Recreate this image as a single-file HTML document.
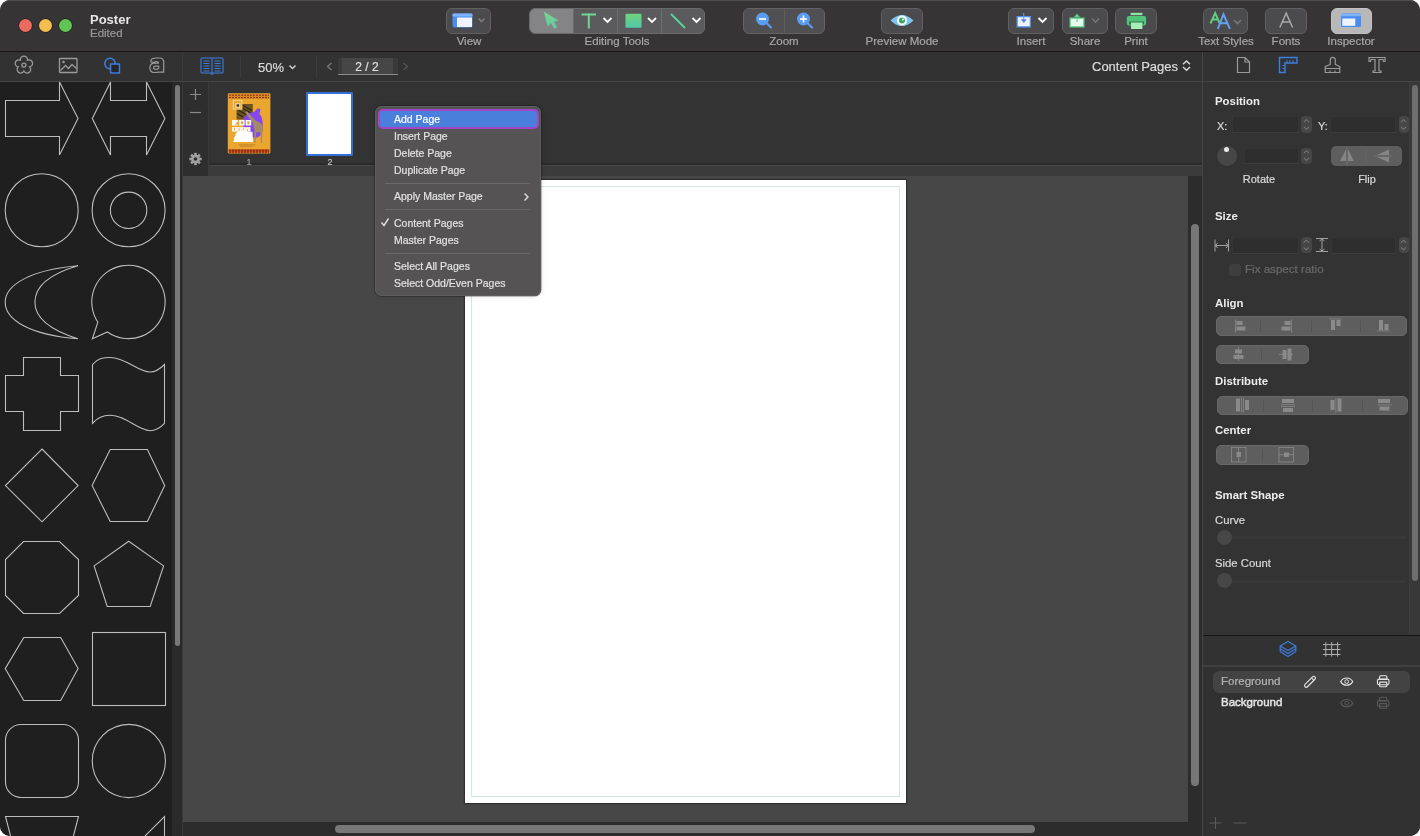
<!DOCTYPE html>
<html><head><meta charset="utf-8">
<style>
*{margin:0;padding:0;box-sizing:border-box}
html,body{width:1420px;height:836px;overflow:hidden;background:#ffffff;font-family:"Liberation Sans",sans-serif}
.a{position:absolute}
.t{position:absolute;white-space:nowrap;font-family:"Liberation Sans",sans-serif;will-change:transform}
svg{will-change:transform}
#win{position:absolute;left:0;top:0;width:1420px;height:836px;overflow:hidden;border-radius:10px;background:#303030}
</style></head><body><div id="win">
<div class="a" style="left:0px;top:0px;width:1420px;height:51px;background:#363435;"></div>
<div class="a" style="left:0px;top:51px;width:1420px;height:1px;background:#161516;"></div>
<div class="a" style="left:0px;top:52px;width:1420px;height:29px;background:#323232;"></div>
<div class="a" style="left:0px;top:81px;width:1420px;height:1px;background:#444444;"></div>
<div class="a" style="left:0px;top:82px;width:171.5px;height:754px;background:#201f20;"></div>
<div class="a" style="left:171.5px;top:82px;width:10.5px;height:754px;background:#2a2a2a;"></div>
<div class="a" style="left:174.8px;top:85px;width:5.6px;height:561px;background:#787878;border-radius:3px"></div>
<div class="a" style="left:182px;top:52px;width:1px;height:784px;background:#3a3a3a;"></div>
<div class="a" style="left:183px;top:82px;width:25px;height:94px;background:#2e2e2e;"></div>
<div class="a" style="left:208px;top:82px;width:1px;height:94px;background:#3a3a3a;"></div>
<div class="a" style="left:209px;top:82px;width:993px;height:83px;background:#333333;"></div>
<div class="a" style="left:209px;top:163px;width:993px;height:1.5px;background:#2b2b2b;"></div>
<div class="a" style="left:209px;top:164.5px;width:993px;height:1px;background:#454545;"></div>
<div class="a" style="left:209px;top:165.5px;width:993px;height:10.5px;background:#3b3b3b;"></div>
<div class="a" style="left:183px;top:176px;width:1005px;height:646px;background:#474747;"></div>
<div class="a" style="left:1188px;top:176px;width:14px;height:646px;background:#2c2c2c;"></div>
<div class="a" style="left:1191px;top:224px;width:8px;height:562px;background:#777777;border-radius:4px"></div>
<div class="a" style="left:183px;top:822px;width:1019px;height:14px;background:#2c2c2c;"></div>
<div class="a" style="left:335px;top:825px;width:700px;height:8px;background:#777777;border-radius:4px"></div>
<div class="a" style="left:1202px;top:52px;width:1px;height:784px;background:#454545;"></div>
<div class="a" style="left:1203px;top:82px;width:217px;height:553px;background:#333333;"></div>
<div class="a" style="left:1409px;top:82px;width:11px;height:553px;background:#383838;border-left:1px solid #3d3d3d"></div>
<div class="a" style="left:1412px;top:85px;width:6px;height:496px;background:#6e6e6e;border-radius:3px"></div>
<div class="a" style="left:1203px;top:634.5px;width:217px;height:1.5px;background:#161616;"></div>
<div class="a" style="left:1203px;top:636px;width:217px;height:29px;background:#323232;"></div>
<div class="a" style="left:1203px;top:665px;width:217px;height:1.5px;background:#3f3f3f;"></div>
<div class="a" style="left:1203px;top:666.5px;width:217px;height:170px;background:#313131;"></div>
<div class="a" style="left:19.0px;top:19.3px;width:13px;height:13px;border-radius:50%;background:#ec6a5e;box-shadow:0 0 0 0.7px rgba(0,0,0,0.35)"></div>
<div class="a" style="left:39.0px;top:19.3px;width:13px;height:13px;border-radius:50%;background:#f4bf4f;box-shadow:0 0 0 0.7px rgba(0,0,0,0.35)"></div>
<div class="a" style="left:59.0px;top:19.3px;width:13px;height:13px;border-radius:50%;background:#61c554;box-shadow:0 0 0 0.7px rgba(0,0,0,0.35)"></div>
<div class="t" style="left:90px;top:12.6px;font-size:13px;line-height:13px;color:#e6e6e6;font-weight:bold;">Poster</div>
<div class="t" style="left:90px;top:27.77px;font-size:11.5px;line-height:11.5px;color:#9a9a9a;font-weight:normal;-webkit-text-stroke:0.2px #9a9a9a;">Edited</div>
<div class="a" style="left:446px;top:8px;width:45px;height:26px;background:#4b4a4c;border:1px solid #605f61;border-radius:6px"></div>
<svg class="a" style="left:0px;top:0px" width="1420" height="836" viewBox="0 0 1420 836"><rect x="452.5" y="13.5" width="20" height="14" rx="2" fill="#4a8cf0"/><rect x="452.5" y="13.5" width="20" height="3" rx="1" fill="#7fb2ff"/><rect x="457" y="17.5" width="15" height="9.5" fill="#eef4ff"/><path d="M478.5 18.5 L481.5 21.5 L484.5 18.5" stroke="#7b7a7c" stroke-width="1.6" fill="none"/></svg>
<div class="t" style="left:268.5px;width:400px;text-align:center;top:36.17px;font-size:11.5px;line-height:11.5px;color:#a8a8a8;font-weight:normal;-webkit-text-stroke:0.2px #a8a8a8;">View</div>
<div class="a" style="left:529px;top:8px;width:176px;height:26px;background:#5b5a5c;border:1px solid #6a696b;border-radius:6px;overflow:hidden"><div class="a" style="left:0;top:0;width:43px;height:24px;background:#848385"></div></div>
<div class="a" style="left:617px;top:9px;width:1px;height:24px;background:#6d6c6e;"></div>
<div class="a" style="left:661px;top:9px;width:1px;height:24px;background:#6d6c6e;"></div>
<div class="a" style="left:573px;top:9px;width:1px;height:24px;background:#6a696b;"></div>
<svg class="a" style="left:0px;top:0px" width="1420" height="836" viewBox="0 0 1420 836"><defs><linearGradient id="ga" x1="0" y1="0" x2="0" y2="1"><stop offset="0" stop-color="#7ad690"/><stop offset="1" stop-color="#62c8a6"/></linearGradient></defs><path d="M544.3 12.3 L547.8 26.3 L551 22.5 L554.3 28.5 L556.8 27.2 L553.5 21.2 L558 20.5 Z" fill="url(#ga)" stroke="url(#ga)" stroke-width="0.6" stroke-linejoin="round"/><rect x="581.5" y="13.5" width="14.5" height="2" fill="#72d493"/><rect x="587.8" y="13.5" width="2" height="15" fill="#72d493"/><path d="M603.5 18 L607.5 22 L611.5 18" stroke="#ffffff" stroke-width="1.8" fill="none"/><defs><linearGradient id="gq" x1="0" y1="0" x2="0" y2="1"><stop offset="0" stop-color="#6fd27e"/><stop offset="1" stop-color="#52c8a8"/></linearGradient></defs><rect x="625.5" y="13.8" width="16" height="14" rx="1" fill="url(#gq)"/><path d="M648 18 L652 22 L656 18" stroke="#ffffff" stroke-width="1.8" fill="none"/><path d="M671.5 14.5 L684.5 27.5" stroke="#5fcf98" stroke-width="2" stroke-linecap="round"/><path d="M692.5 18 L696.5 22 L700.5 18" stroke="#ffffff" stroke-width="1.8" fill="none"/></svg>
<div class="t" style="left:417px;width:400px;text-align:center;top:36.17px;font-size:11.5px;line-height:11.5px;color:#a8a8a8;font-weight:normal;-webkit-text-stroke:0.2px #a8a8a8;">Editing Tools</div>
<div class="a" style="left:743px;top:8px;width:82px;height:26px;background:#504f51;border:1px solid #636264;border-radius:6px"></div>
<div class="a" style="left:784px;top:9px;width:1px;height:24px;background:#5d5c5e;"></div>
<svg class="a" style="left:0px;top:0px" width="1420" height="836" viewBox="0 0 1420 836"><circle cx="762.5" cy="19" r="6.5" fill="#5a9cf0"/><path d="M767 23.5 L771 27.5" stroke="#5a9cf0" stroke-width="2.2" stroke-linecap="round"/><rect x="759" y="18.2" width="7" height="1.6" fill="#ffffff"/><circle cx="803.5" cy="19" r="6.5" fill="#5a9cf0"/><path d="M808 23.5 L812 27.5" stroke="#5a9cf0" stroke-width="2.2" stroke-linecap="round"/><rect x="800" y="18.2" width="7" height="1.6" fill="#ffffff"/><rect x="802.7" y="15.5" width="1.6" height="7" fill="#ffffff"/></svg>
<div class="t" style="left:584px;width:400px;text-align:center;top:36.17px;font-size:11.5px;line-height:11.5px;color:#a8a8a8;font-weight:normal;-webkit-text-stroke:0.2px #a8a8a8;">Zoom</div>
<div class="a" style="left:881px;top:8px;width:42px;height:26px;background:#4b4a4c;border:1px solid #605f61;border-radius:6px"></div>
<svg class="a" style="left:0px;top:0px" width="1420" height="836" viewBox="0 0 1420 836"><path d="M890.5 20.5 Q902 9.5 913.5 20.5 Q902 31.5 890.5 20.5 Z" fill="#7cc4ee"/><circle cx="902" cy="20.5" r="5" fill="#ffffff"/><circle cx="902" cy="20.5" r="3" fill="#3aa860"/><circle cx="903" cy="19.5" r="1" fill="#ffffff"/></svg>
<div class="t" style="left:702px;width:400px;text-align:center;top:36.17px;font-size:11.5px;line-height:11.5px;color:#a8a8a8;font-weight:normal;-webkit-text-stroke:0.2px #a8a8a8;">Preview Mode</div>
<div class="a" style="left:1008px;top:8px;width:46px;height:26px;background:#4b4a4c;border:1px solid #605f61;border-radius:6px"></div>
<svg class="a" style="left:0px;top:0px" width="1420" height="836" viewBox="0 0 1420 836"><rect x="1016.5" y="16" width="14.5" height="11.5" fill="#5590f0"/><rect x="1017.8" y="17.3" width="11.9" height="8.9" fill="#eef4ff"/><path d="M1023.75 13 V20" stroke="#6b9cf0" stroke-width="1"/><path d="M1020.8 19.3 H1026.7 L1023.75 23 Z" fill="#4a86e8"/><path d="M1038.5 18 L1042.5 22 L1046.5 18" stroke="#ffffff" stroke-width="1.8" fill="none"/></svg>
<div class="t" style="left:831px;width:400px;text-align:center;top:36.17px;font-size:11.5px;line-height:11.5px;color:#a8a8a8;font-weight:normal;-webkit-text-stroke:0.2px #a8a8a8;">Insert</div>
<div class="a" style="left:1062px;top:8px;width:46px;height:26px;background:#4b4a4c;border:1px solid #605f61;border-radius:6px"></div>
<svg class="a" style="left:0px;top:0px" width="1420" height="836" viewBox="0 0 1420 836"><rect x="1069.5" y="17.5" width="15" height="10" fill="#5fd08a"/><rect x="1070.8" y="18.8" width="12.4" height="7.4" fill="#e4fbee"/><path d="M1077 17 V22" stroke="#5cc985" stroke-width="1"/><path d="M1073.8 17.3 H1080.2 L1077 13.5 Z" fill="#5cc985"/><path d="M1092 18.5 L1095.5 22 L1099 18.5" stroke="#767577" stroke-width="1.6" fill="none"/></svg>
<div class="t" style="left:884.5px;width:400px;text-align:center;top:36.17px;font-size:11.5px;line-height:11.5px;color:#a8a8a8;font-weight:normal;-webkit-text-stroke:0.2px #a8a8a8;">Share</div>
<div class="a" style="left:1115px;top:8px;width:42px;height:26px;background:#4b4a4c;border:1px solid #605f61;border-radius:6px"></div>
<svg class="a" style="left:0px;top:0px" width="1420" height="836" viewBox="0 0 1420 836"><rect x="1130.6" y="12.8" width="11.8" height="2.4" fill="#8ee6a4"/><rect x="1126.8" y="16" width="19.3" height="9.5" rx="2" fill="#52c47a"/><rect x="1129" y="21.5" width="15" height="3" fill="#2f7a4e"/><rect x="1131" y="22.5" width="11.4" height="6.5" fill="#a4f0b4"/></svg>
<div class="t" style="left:935.5px;width:400px;text-align:center;top:36.17px;font-size:11.5px;line-height:11.5px;color:#a8a8a8;font-weight:normal;-webkit-text-stroke:0.2px #a8a8a8;">Print</div>
<div class="a" style="left:1203px;top:8px;width:45px;height:26px;background:#4b4a4c;border:1px solid #605f61;border-radius:6px"></div>
<svg class="a" style="left:0px;top:0px" width="1420" height="836" viewBox="0 0 1420 836"><path d="M1210.5 23.5 L1215.2 13.2 L1219.5 23 M1212.5 19.5 H1217.8" stroke="#62d07e" stroke-width="1.9" fill="none"/><path d="M1217.8 28.8 L1223.5 14.3 L1229.9 28.8 M1220 23.2 H1227.8" stroke="#62a2f5" stroke-width="1.9" fill="none"/><path d="M1234 20 L1237.5 23.5 L1241 20" stroke="#767577" stroke-width="1.6" fill="none"/></svg>
<div class="t" style="left:1026px;width:400px;text-align:center;top:36.17px;font-size:11.5px;line-height:11.5px;color:#a8a8a8;font-weight:normal;-webkit-text-stroke:0.2px #a8a8a8;">Text Styles</div>
<div class="a" style="left:1265px;top:8px;width:42px;height:26px;background:#4b4a4c;border:1px solid #605f61;border-radius:6px"></div>
<svg class="a" style="left:0px;top:0px" width="1420" height="836" viewBox="0 0 1420 836"><path d="M1279.8 27.5 L1286.2 13.2 L1292.6 27.5 M1282.3 22 H1290.1" stroke="#a8a8a8" stroke-width="1.5" fill="none"/></svg>
<div class="t" style="left:1086px;width:400px;text-align:center;top:36.17px;font-size:11.5px;line-height:11.5px;color:#a8a8a8;font-weight:normal;-webkit-text-stroke:0.2px #a8a8a8;">Fonts</div>
<div class="a" style="left:1331px;top:8px;width:41px;height:26px;background:#b8b8b8;border:1px solid #c2c2c2;border-radius:6px"></div>
<svg class="a" style="left:0px;top:0px" width="1420" height="836" viewBox="0 0 1420 836"><rect x="1341" y="13.6" width="20" height="13.3" rx="1.5" fill="#4a8cf0"/><rect x="1341" y="13.6" width="20" height="2.6" rx="1" fill="#80b0f6"/><rect x="1342.3" y="18.5" width="13" height="7.3" fill="#eef4ff"/></svg>
<div class="t" style="left:1151px;width:400px;text-align:center;top:36.17px;font-size:11.5px;line-height:11.5px;color:#a8a8a8;font-weight:normal;-webkit-text-stroke:0.2px #a8a8a8;">Inspector</div>
<svg class="a" style="left:0px;top:0px" width="1420" height="836" viewBox="0 0 1420 836"><g fill="none" stroke="#9a9a9a" stroke-width="1.3"><circle cx="23.9" cy="65.1" r="2"/><path d="M20.32 60.18 A3.6 3.6 0 1 1 27.48 60.18 A3.6 3.6 0 1 1 29.68 66.98 A3.6 3.6 0 1 1 23.90 71.18 A3.6 3.6 0 1 1 18.12 66.98 A3.6 3.6 0 1 1 20.32 60.18 Z"/></g><g fill="none" stroke="#9a9a9a" stroke-width="1.3"><rect x="59.5" y="58.5" width="17.5" height="14" rx="0.5"/><path d="M60.5 70.5 L65.5 65.5 L68.5 68.5 L72 64.5 L76.5 68.5"/></g><circle cx="63.5" cy="62" r="1.3" fill="#9a9a9a"/><g fill="none" stroke="#3d7ee0" stroke-width="1.5"><circle cx="110" cy="63.5" r="5.2"/><rect x="110.5" y="64" width="9" height="9" rx="0.5" fill="#272727"/></g></svg>
<svg class="a" style="left:0px;top:0px" width="1420" height="836" viewBox="0 0 1420 836"><g fill="none" stroke="#9a9a9a" stroke-width="1.2" stroke-linejoin="round"><path d="M150.8 61.8 C150.5 59 153 58 156.5 58 H159.5 C162 58 163.7 59.5 163.7 62 V72.2 H158.8 C157.5 72.4 155.5 72.5 154 72.5 C151.5 72.5 149.9 70.5 149.9 67.8 C149.9 65 152 63.2 155 63.2 H158.5 C158.5 62 157.5 61.5 156.5 61.5 C155 61.5 154.5 62 154.3 62.3 Z"/><path d="M158.7 66.2 H155.5 C154.3 66.2 153.5 66.8 153.5 67.8 C153.5 68.8 154.3 69.4 155.5 69.4 C157.2 69.4 158.7 68.8 158.7 67.5 Z"/></g></svg>
<svg class="a" style="left:0px;top:0px" width="1420" height="836" viewBox="0 0 1420 836"><g fill="none" stroke="#3d7ee0" stroke-width="1.1"><rect x="201" y="58" width="22" height="15" rx="1"/><path d="M212 58 L212 73"/><path d="M203.5 61 H209.5 M203.5 63.5 H209.5 M203.5 66 H209.5 M203.5 68.5 H209.5 M203.5 71 H209.5 M214.5 61 H220.5 M214.5 63.5 H220.5 M214.5 66 H220.5 M214.5 68.5 H220.5 M214.5 71 H220.5" stroke-width="1"/></g><path d="M209.5 73.5 L212 75 L214.5 73.5 Z" fill="#3d7ee0"/></svg>
<div class="a" style="left:240px;top:56px;width:1px;height:22px;background:#3c3c3c;"></div>
<div class="t" style="left:258px;top:61.0px;font-size:13px;line-height:13px;color:#d8d8d8;font-weight:normal;-webkit-text-stroke:0.2px #d8d8d8;">50%</div>
<svg class="a" style="left:0px;top:0px" width="1420" height="836" viewBox="0 0 1420 836"><path d="M289.5 65.5 L292.5 68.5 L295.5 65.5" stroke="#d0d0d0" stroke-width="1.5" fill="none"/></svg>
<div class="a" style="left:316px;top:56px;width:1px;height:22px;background:#3c3c3c;"></div>
<svg class="a" style="left:0px;top:0px" width="1420" height="836" viewBox="0 0 1420 836"><path d="M331.5 63 L327.5 66.5 L331.5 70" stroke="#7a7a7a" stroke-width="1.3" fill="none"/><path d="M403.5 63 L407.5 66.5 L403.5 70" stroke="#555555" stroke-width="1.3" fill="none"/></svg>
<div class="a" style="left:338px;top:58px;width:60px;height:17px;background:#3a3a3a;"></div>
<div class="a" style="left:342px;top:58px;width:51px;height:16px;background:#464646;"></div>
<div class="a" style="left:338px;top:74px;width:60px;height:1px;background:#8a8a8a;"></div>
<div class="t" style="left:167px;width:400px;text-align:center;top:61.34px;font-size:12px;line-height:12px;color:#e0e0e0;font-weight:normal;-webkit-text-stroke:0.2px #e0e0e0;">2 / 2</div>
<div class="t" style="left:1092px;top:59.5px;font-size:13px;line-height:13px;color:#dcdcdc;font-weight:normal;-webkit-text-stroke:0.2px #dcdcdc;">Content Pages</div>
<svg class="a" style="left:0px;top:0px" width="1420" height="836" viewBox="0 0 1420 836"><path d="M1183 64.3 L1186.5 61 L1190 64.3 M1183 67 L1186.5 70.3 L1190 67" stroke="#d8d8d8" stroke-width="1.5" fill="none"/></svg>
<svg class="a" style="left:0px;top:0px" width="1420" height="836" viewBox="0 0 1420 836"><path d="M1237.5 57.5 H1245 L1249.5 62 V72.5 H1237.5 Z M1245 57.5 V62 H1249.5" fill="none" stroke="#9a9a9a" stroke-width="1.2"/><path d="M1279.5 57.5 H1297 V63 H1285 V72.5 H1279.5 Z" fill="none" stroke="#3d7ee0" stroke-width="1.4"/><path d="M1287 60 V63 M1290 60 V62 M1293 60 V63 M1282.5 65.5 H1284.5 M1282.5 68.5 H1284.5" stroke="#3d7ee0" stroke-width="1"/><path d="M1330.3 64.5 V59.8 A2.5 2.5 0 0 1 1335.3 59.8 V64.5 L1339.8 66.5 V72.5 H1325.2 V66.5 Z M1325.2 68.5 H1339.8 M1330 72.5 V70.5 M1335 72.5 V70.5" fill="none" stroke="#9a9a9a" stroke-width="1.2" stroke-linejoin="round"/><path d="M1369 57.5 H1385 V61.5 H1383.5 L1383 59.5 H1379 V71 H1381 V72.5 H1373 V71 H1375 V59.5 H1371 L1370.5 61.5 H1369 Z" fill="none" stroke="#9a9a9a" stroke-width="1.2"/></svg>
<svg class="a" style="left:0px;top:0px" width="1420" height="836" viewBox="0 0 1420 836"><path d="M195.5 89 V100 M190 94.5 H201" stroke="#8a8a8a" stroke-width="1.2"/><path d="M190 112.5 H201" stroke="#8a8a8a" stroke-width="1.2"/></svg>
<svg class="a" style="left:0px;top:0px" width="1420" height="836" viewBox="0 0 1420 836"><g transform="translate(195.5,159)"><circle r="4.3" fill="#a0a0a0"/><rect x="-1.3" y="-6.2" width="2.6" height="3" fill="#a0a0a0" transform="rotate(0)"/><rect x="-1.3" y="-6.2" width="2.6" height="3" fill="#a0a0a0" transform="rotate(45)"/><rect x="-1.3" y="-6.2" width="2.6" height="3" fill="#a0a0a0" transform="rotate(90)"/><rect x="-1.3" y="-6.2" width="2.6" height="3" fill="#a0a0a0" transform="rotate(135)"/><rect x="-1.3" y="-6.2" width="2.6" height="3" fill="#a0a0a0" transform="rotate(180)"/><rect x="-1.3" y="-6.2" width="2.6" height="3" fill="#a0a0a0" transform="rotate(225)"/><rect x="-1.3" y="-6.2" width="2.6" height="3" fill="#a0a0a0" transform="rotate(270)"/><rect x="-1.3" y="-6.2" width="2.6" height="3" fill="#a0a0a0" transform="rotate(315)"/><circle r="1.8" fill="#2e2e2e"/></g></svg>
<svg class="a" style="left:0px;top:0px" width="1420" height="836" viewBox="0 0 1420 836"><rect x="227.8" y="93.2" width="42.6" height="60.2" rx="1.2" fill="#eaa62e"/><rect x="228.5" y="94" width="41" height="5" fill="#d8862a"/><path d="M229 95.2 h40 M229 97.6 h40" stroke="#8a3414" stroke-width="1" stroke-dasharray="2 1"/><rect x="228.5" y="149.3" width="41" height="3.5" fill="#c8501a"/><path d="M229 150.2 h40 M229 152 h40" stroke="#701c10" stroke-width="0.9" stroke-dasharray="2 1"/><rect x="236.6" y="104" width="16.2" height="15.5" fill="#6a5422"/><path d="M237 105.5 l15 8 M237 109.5 l11 6 M241 104.5 l11 6 M237 113.5 l6 3.5" stroke="#2e2410" stroke-width="1.1"/><rect x="233.3" y="100.4" width="8.6" height="8.8" fill="#eaa62e" stroke="#f7d88a" stroke-width="1"/><rect x="235.4" y="103.3" width="4.9" height="4.5" fill="#f4e2b8"/><rect x="236.6" y="104.3" width="2.6" height="2.4" fill="#3a2a10"/><path d="M243 122 C243 116 249 112 254 112 L257.5 108.5 L260.5 109 L259.5 114 C263 117 263.5 125 262 132 C260.5 137 256 139 251 137 L244 134 Z" fill="#8546ee"/><path d="M245 112.3 L246.8 111.3 L255.5 120.5 L261.5 123.5 L263.5 131 L262.3 131.5 L262 143 L261 143 L260.3 132.5 L256.5 132 L255.3 143 L254.3 143 L254.3 129.5 L253 123 Z" fill="#a48a6a"/><path d="M232 125.6 V120 H238 V121.2 L234.6 124.4 H238 V125.6 Z M239.2 120 H244.6 V125.6 H239.2 Z M245.6 120 H251.2 V125.6 H245.6 Z" fill="#ffffff"/><rect x="241" y="121.3" width="2.2" height="3" fill="#eaa62e"/><rect x="247.3" y="121.3" width="2.2" height="3" fill="#eaa62e"/><rect x="232" y="127.1" width="18.5" height="4.5" fill="#fbf3e6"/><path d="M234.5 128 v2.5 M239 128 v3.6 M243.5 128 v2 M247.5 129 v2.6" stroke="#d8a860" stroke-width="0.8"/><path d="M233 142 L234.5 139 L233.5 138.5 L236 135 L235 134.5 L238 131 L246 131 L252.5 132 L253 142 Z" fill="#ffffff"/><path d="M238.5 144.8 h17 M240 146.3 h13" stroke="#b8782a" stroke-width="0.7"/></svg>
<div class="t" style="left:49px;width:400px;text-align:center;top:157.58px;font-size:9px;line-height:9px;color:#9a9a9a;font-weight:normal;-webkit-text-stroke:0.2px #9a9a9a;">1</div>
<div class="a" style="left:306px;top:92px;width:47px;height:64px;border:2.4px solid #336fd8;background:#ffffff;border-radius:1px"></div>
<div class="t" style="left:130px;width:400px;text-align:center;top:157.58px;font-size:9px;line-height:9px;color:#c0c0c0;font-weight:normal;-webkit-text-stroke:0.2px #c0c0c0;">2</div>
<div class="a" style="left:465px;top:180px;width:441px;height:623px;background:#ffffff;box-shadow:0 0 1.2px 1px rgba(0,0,0,0.4)"></div>
<div class="a" style="left:471px;top:186px;width:429px;height:611px;border:1px solid #d0e8e4"></div>
<div class="a" style="left:375px;top:106px;width:166px;height:190px;background:#555354;border:1px solid #5f5e5f;border-radius:6px;box-shadow:0 0 0 0.5px rgba(0,0,0,0.45),0 0 5px rgba(0,0,0,0.15)"></div>
<div class="a" style="left:378px;top:108.5px;width:161px;height:20px;background:#4a80dc;border:2px solid #a444c8;border-radius:5px"></div>
<div class="t" style="left:394px;top:113.71px;font-size:10.5px;line-height:10.5px;color:#ffffff;font-weight:normal;-webkit-text-stroke:0.2px #ffffff;">Add Page</div>
<div class="t" style="left:394px;top:130.91px;font-size:10.5px;line-height:10.5px;color:#e2e2e2;font-weight:normal;-webkit-text-stroke:0.2px #e2e2e2;">Insert Page</div>
<div class="t" style="left:394px;top:148.11px;font-size:10.5px;line-height:10.5px;color:#e2e2e2;font-weight:normal;-webkit-text-stroke:0.2px #e2e2e2;">Delete Page</div>
<div class="t" style="left:394px;top:165.41px;font-size:10.5px;line-height:10.5px;color:#e2e2e2;font-weight:normal;-webkit-text-stroke:0.2px #e2e2e2;">Duplicate Page</div>
<div class="a" style="left:385px;top:183px;width:145px;height:1px;background:#6a696b;"></div>
<div class="t" style="left:394px;top:191.41px;font-size:10.5px;line-height:10.5px;color:#e2e2e2;font-weight:normal;-webkit-text-stroke:0.2px #e2e2e2;">Apply Master Page</div>
<svg class="a" style="left:0px;top:0px" width="1420" height="836" viewBox="0 0 1420 836"><path d="M524.5 193.5 L528 197 L524.5 200.5" stroke="#e0e0e0" stroke-width="1.4" fill="none"/></svg>
<div class="a" style="left:385px;top:209px;width:145px;height:1px;background:#6a696b;"></div>
<div class="t" style="left:394px;top:217.61px;font-size:10.5px;line-height:10.5px;color:#e2e2e2;font-weight:normal;-webkit-text-stroke:0.2px #e2e2e2;">Content Pages</div>
<svg class="a" style="left:0px;top:0px" width="1420" height="836" viewBox="0 0 1420 836"><path d="M381.5 222.5 L384 225.5 L388.5 218.5" stroke="#e0e0e0" stroke-width="1.4" fill="none"/></svg>
<div class="t" style="left:394px;top:234.91px;font-size:10.5px;line-height:10.5px;color:#e2e2e2;font-weight:normal;-webkit-text-stroke:0.2px #e2e2e2;">Master Pages</div>
<div class="a" style="left:385px;top:253px;width:145px;height:1px;background:#6a696b;"></div>
<div class="t" style="left:394px;top:260.91px;font-size:10.5px;line-height:10.5px;color:#e2e2e2;font-weight:normal;-webkit-text-stroke:0.2px #e2e2e2;">Select All Pages</div>
<div class="t" style="left:394px;top:278.11px;font-size:10.5px;line-height:10.5px;color:#e2e2e2;font-weight:normal;-webkit-text-stroke:0.2px #e2e2e2;">Select Odd/Even Pages</div>
<div class="t" style="left:1215px;top:96.15px;font-size:11.4px;line-height:11.4px;color:#ececec;font-weight:bold;">Position</div>
<div class="t" style="left:1217px;top:120.89px;font-size:11px;line-height:11px;color:#d8d8d8;font-weight:normal;-webkit-text-stroke:0.2px #d8d8d8;">X:</div>
<div class="t" style="left:1317.5px;top:120.89px;font-size:11px;line-height:11px;color:#d8d8d8;font-weight:normal;-webkit-text-stroke:0.2px #d8d8d8;">Y:</div>
<div class="a" style="left:1232px;top:116px;width:67px;height:17px;background:#2e2e2e;border:1px solid #353535"></div>
<div class="a" style="left:1232px;top:132px;width:67px;height:1px;background:#3c3c3c;"></div>
<div class="a" style="left:1301px;top:116px;width:11px;height:17px;background:#464646;border-radius:4px"></div>
<svg class="a" style="left:0px;top:0px" width="1420" height="836" viewBox="0 0 1420 836"><path d="M1303.9 122.2 L1306.5 119.7 L1309.1 122.2 M1303.9 126.8 L1306.5 129.3 L1309.1 126.8" stroke="#757575" stroke-width="1.1" fill="none"/></svg>
<div class="a" style="left:1330px;top:116px;width:66px;height:17px;background:#2e2e2e;border:1px solid #353535"></div>
<div class="a" style="left:1330px;top:132px;width:66px;height:1px;background:#3c3c3c;"></div>
<div class="a" style="left:1398.5px;top:116px;width:10.0px;height:17px;background:#464646;border-radius:4px"></div>
<svg class="a" style="left:0px;top:0px" width="1420" height="836" viewBox="0 0 1420 836"><path d="M1400.9 122.2 L1403.5 119.7 L1406.1 122.2 M1400.9 126.8 L1403.5 129.3 L1406.1 126.8" stroke="#757575" stroke-width="1.1" fill="none"/></svg>
<div class="a" style="left:1217px;top:146px;width:20px;height:20px;border-radius:50%;background:#474747"></div>
<div class="a" style="left:1224px;top:146.5px;width:5px;height:5px;border-radius:50%;background:#e8e8e8"></div>
<div class="a" style="left:1243.5px;top:147.5px;width:55.5px;height:16.5px;background:#2e2e2e;border:1px solid #353535"></div>
<div class="a" style="left:1243.5px;top:163px;width:55.5px;height:1px;background:#3c3c3c;"></div>
<div class="a" style="left:1301px;top:147.5px;width:11px;height:16.0px;background:#464646;border-radius:4px"></div>
<svg class="a" style="left:0px;top:0px" width="1420" height="836" viewBox="0 0 1420 836"><path d="M1303.9 153.2 L1306.5 150.7 L1309.1 153.2 M1303.9 157.8 L1306.5 160.3 L1309.1 157.8" stroke="#757575" stroke-width="1.1" fill="none"/></svg>
<div class="a" style="left:1330.5px;top:146px;width:71px;height:20px;background:#5e5e5e;border-radius:5px"></div>
<svg class="a" style="left:0px;top:0px" width="1420" height="836" viewBox="0 0 1420 836"><path d="M1347 147.5 V165" stroke="#7a7a7a" stroke-width="0.8"/><path d="M1346 149.5 L1340 161 H1346 Z M1348 149.5 L1354 161 H1348 Z" fill="#858585"/><path d="M1366 150 V162" stroke="#6a6a6a" stroke-width="0.8"/><path d="M1374.5 156 H1392" stroke="#7a7a7a" stroke-width="0.8"/><path d="M1389 149.5 L1377 155 V155 H1389 Z M1389 162.5 L1377 157 H1389 Z" fill="#858585"/></svg>
<div class="t" style="left:1058.5px;width:400px;text-align:center;top:173.89px;font-size:11px;line-height:11px;color:#dcdcdc;font-weight:normal;-webkit-text-stroke:0.2px #dcdcdc;">Rotate</div>
<div class="t" style="left:1166.5px;width:400px;text-align:center;top:173.89px;font-size:11px;line-height:11px;color:#dcdcdc;font-weight:normal;-webkit-text-stroke:0.2px #dcdcdc;">Flip</div>
<div class="t" style="left:1215px;top:210.65px;font-size:11.4px;line-height:11.4px;color:#ececec;font-weight:bold;">Size</div>
<svg class="a" style="left:0px;top:0px" width="1420" height="836" viewBox="0 0 1420 836"><path d="M1215 239.5 V251.5 M1228.5 239.5 V251.5 M1215 245.5 H1228.5 M1217.5 243 L1215.5 245.5 L1217.5 248 M1226 243 L1228 245.5 L1226 248" stroke="#a0a0a0" stroke-width="1" fill="none"/><path d="M1316 238.5 H1328 M1316 251.5 H1328 M1322 238.5 V251.5 M1319.5 241 L1322 239 L1324.5 241 M1319.5 249 L1322 251 L1324.5 249" stroke="#a0a0a0" stroke-width="1" fill="none"/></svg>
<div class="a" style="left:1231.5px;top:237px;width:67.0px;height:17px;background:#2e2e2e;border:1px solid #353535"></div>
<div class="a" style="left:1231.5px;top:253px;width:67.0px;height:1px;background:#3c3c3c;"></div>
<div class="a" style="left:1300.5px;top:237px;width:11.5px;height:16px;background:#464646;border-radius:4px"></div>
<svg class="a" style="left:0px;top:0px" width="1420" height="836" viewBox="0 0 1420 836"><path d="M1303.65 242.7 L1306.25 240.2 L1308.85 242.7 M1303.65 247.3 L1306.25 249.8 L1308.85 247.3" stroke="#757575" stroke-width="1.1" fill="none"/></svg>
<div class="a" style="left:1330.5px;top:237px;width:65.5px;height:17px;background:#2e2e2e;border:1px solid #353535"></div>
<div class="a" style="left:1330.5px;top:253px;width:65.5px;height:1px;background:#3c3c3c;"></div>
<div class="a" style="left:1398.5px;top:237px;width:10.0px;height:16px;background:#464646;border-radius:4px"></div>
<svg class="a" style="left:0px;top:0px" width="1420" height="836" viewBox="0 0 1420 836"><path d="M1400.9 242.7 L1403.5 240.2 L1406.1 242.7 M1400.9 247.3 L1403.5 249.8 L1406.1 247.3" stroke="#757575" stroke-width="1.1" fill="none"/></svg>
<div class="a" style="left:1229px;top:263.5px;width:12px;height:12px;background:#3e3e3e;border-radius:3px"></div>
<div class="t" style="left:1244.5px;top:263.38px;font-size:11.6px;line-height:11.6px;color:#6a6a6a;font-weight:normal;-webkit-text-stroke:0.2px #6a6a6a;">Fix aspect ratio</div>
<div class="t" style="left:1215px;top:298.35px;font-size:11.4px;line-height:11.4px;color:#ececec;font-weight:bold;">Align</div>
<div class="a" style="left:1216px;top:316px;width:191px;height:19.5px;background:#5e5e5e;border:1px solid #686868;border-radius:5px"></div>
<div class="a" style="left:1260px;top:320px;width:1px;height:11.5px;background:#545454;"></div>
<div class="a" style="left:1311px;top:320px;width:1px;height:11.5px;background:#545454;"></div>
<div class="a" style="left:1360px;top:320px;width:1px;height:11.5px;background:#545454;"></div>
<svg class="a" style="left:0px;top:0px" width="1420" height="836" viewBox="0 0 1420 836"><g fill="#8a8a8a"><rect x="1235" y="319.5" width="0.8" height="13"/><rect x="1236.5" y="321" width="6" height="4"/><rect x="1236.5" y="326.5" width="9" height="4"/><rect x="1291" y="319.5" width="0.8" height="13"/><rect x="1284.5" y="321" width="6" height="4"/><rect x="1281.5" y="326.5" width="9" height="4"/><rect x="1329" y="318.5" width="12.5" height="0.8"/><rect x="1331" y="320" width="4" height="10"/><rect x="1336.5" y="320" width="4" height="6"/><rect x="1377" y="330.5" width="12.5" height="0.8"/><rect x="1379" y="320" width="4" height="10"/><rect x="1384.5" y="324" width="4" height="6"/></g></svg>
<div class="a" style="left:1216px;top:344.5px;width:92.5px;height:19.5px;background:#5e5e5e;border:1px solid #686868;border-radius:5px"></div>
<div class="a" style="left:1261px;top:348.5px;width:1px;height:11.5px;background:#545454;"></div>
<svg class="a" style="left:0px;top:0px" width="1420" height="836" viewBox="0 0 1420 836"><g fill="#8a8a8a"><rect x="1238" y="347" width="0.8" height="14"/><rect x="1235" y="349.5" width="7" height="4"/><rect x="1233.5" y="355" width="10" height="4"/><rect x="1279" y="354" width="14" height="0.8"/><rect x="1282.5" y="350" width="4" height="9"/><rect x="1287.5" y="348.5" width="4" height="12"/></g></svg>
<div class="t" style="left:1215px;top:376.05px;font-size:11.4px;line-height:11.4px;color:#ececec;font-weight:bold;">Distribute</div>
<div class="a" style="left:1217px;top:395.5px;width:191px;height:19.5px;background:#5e5e5e;border:1px solid #686868;border-radius:5px"></div>
<div class="a" style="left:1262.5px;top:399.5px;width:1px;height:11.5px;background:#545454;"></div>
<div class="a" style="left:1312px;top:399.5px;width:1px;height:11.5px;background:#545454;"></div>
<div class="a" style="left:1361.5px;top:399.5px;width:1px;height:11.5px;background:#545454;"></div>
<svg class="a" style="left:0px;top:0px" width="1420" height="836" viewBox="0 0 1420 836"><g fill="#8a8a8a"><rect x="1236" y="398.5" width="4" height="13"/><rect x="1241" y="397.5" width="0.8" height="15"/><rect x="1243" y="397.5" width="0.8" height="15"/><rect x="1245" y="400" width="4" height="10"/><rect x="1282" y="399" width="12" height="4"/><rect x="1281" y="404" width="14" height="0.8"/><rect x="1281" y="406" width="14" height="0.8"/><rect x="1283" y="408" width="10" height="4"/><rect x="1330.5" y="400" width="4" height="10"/><rect x="1335.5" y="398" width="0.8" height="15"/><rect x="1337.5" y="398.5" width="4" height="13"/><rect x="1378" y="399" width="12" height="4"/><rect x="1377.5" y="404.5" width="14" height="0.8"/><rect x="1379.5" y="406.5" width="10" height="4"/></g></svg>
<div class="t" style="left:1215px;top:424.75px;font-size:11.4px;line-height:11.4px;color:#ececec;font-weight:bold;">Center</div>
<div class="a" style="left:1215.5px;top:445px;width:93.0px;height:20px;background:#5e5e5e;border:1px solid #686868;border-radius:5px"></div>
<div class="a" style="left:1261.5px;top:449px;width:1px;height:12px;background:#545454;"></div>
<svg class="a" style="left:0px;top:0px" width="1420" height="836" viewBox="0 0 1420 836"><g fill="none" stroke="#8a8a8a" stroke-width="0.8"><rect x="1231.5" y="447.5" width="14.5" height="14.5"/><rect x="1279" y="447.5" width="14.5" height="14.5"/></g><g fill="#8a8a8a"><rect x="1238.3" y="447.5" width="0.8" height="14.5"/><rect x="1236.5" y="452" width="4.5" height="5"/><rect x="1279" y="454.3" width="14.5" height="0.8"/><rect x="1284" y="452.5" width="5" height="4.5"/></g></svg>
<div class="t" style="left:1215px;top:490.05px;font-size:11.4px;line-height:11.4px;color:#ececec;font-weight:bold;">Smart Shape</div>
<div class="t" style="left:1215px;top:514.73px;font-size:11.3px;line-height:11.3px;color:#d8d8d8;font-weight:normal;-webkit-text-stroke:0.2px #d8d8d8;">Curve</div>
<div class="a" style="left:1224px;top:536px;width:183px;height:3px;background:#383838;border-radius:1.5px"></div>
<div class="a" style="left:1216.5px;top:530px;width:15px;height:15px;border-radius:50%;background:#474747"></div>
<div class="t" style="left:1215px;top:558.13px;font-size:11.3px;line-height:11.3px;color:#d8d8d8;font-weight:normal;-webkit-text-stroke:0.2px #d8d8d8;">Side Count</div>
<div class="a" style="left:1224px;top:579.5px;width:183px;height:3px;background:#383838;border-radius:1.5px"></div>
<div class="a" style="left:1216.5px;top:573px;width:15px;height:15px;border-radius:50%;background:#474747"></div>
<svg class="a" style="left:0px;top:0px" width="1420" height="836" viewBox="0 0 1420 836"><g fill="none" stroke="#3f7ee0" stroke-width="1.15" stroke-linejoin="round"><path d="M1288 641.5 L1295.8 646 L1288 650.5 L1280.2 646 Z"/><path d="M1280.2 646 V651.5 M1295.8 646 V651.5"/><path d="M1280.2 648.8 L1288 653.4 L1295.8 648.8"/><path d="M1280.2 651.5 L1288 656.6 L1295.8 651.5"/></g><g stroke="#b0b0b0" stroke-width="1"><path d="M1323 644.6 H1340.5 M1323 649.5 H1340.5 M1323 654.5 H1340.5 M1325.8 642.2 V656.6 M1331.7 642.2 V656.6 M1337.6 642.2 V656.6"/></g></svg>
<div class="a" style="left:1213px;top:671px;width:197px;height:22px;background:#434343;border-radius:6px"></div>
<div class="t" style="left:1221px;top:676.27px;font-size:11.5px;line-height:11.5px;color:#b4b4b4;font-weight:normal;-webkit-text-stroke:0.2px #b4b4b4;">Foreground</div>
<div class="t" style="left:1221px;top:697.37px;font-size:11.5px;line-height:11.5px;color:#e4e4e4;font-weight:normal;-webkit-text-stroke:0.45px #e4e4e4">Background</div>
<svg class="a" style="left:0px;top:0px" width="1420" height="836" viewBox="0 0 1420 836"><g transform="translate(1310,681.8) rotate(-45)"><rect x="-7" y="-1.7" width="14" height="3.4" rx="1.7" fill="none" stroke="#e6e6e6" stroke-width="1.1"/><path d="M3.8 -1.7 V1.7" stroke="#e6e6e6" stroke-width="1"/></g><path d="M1340.7 681.6 C1343.5 676.8 1349.9 676.8 1352.7 681.6 C1349.9 686.4 1343.5 686.4 1340.7 681.6 Z" fill="none" stroke="#e6e6e6" stroke-width="1.1"/><circle cx="1346.7" cy="681.6" r="1.9" fill="none" stroke="#e6e6e6" stroke-width="1"/><g fill="none" stroke="#e6e6e6" stroke-width="1.1"><rect x="1379.6" y="675.8" width="7.2" height="3.6" rx="1"/><rect x="1377.4" y="679.0999999999999" width="11.6" height="5.6" rx="1.8"/><rect x="1379.6" y="682.0999999999999" width="7.2" height="4.6" rx="0.6"/></g><path d="M1340.7 703.1 C1343.5 698.3 1349.9 698.3 1352.7 703.1 C1349.9 707.9 1343.5 707.9 1340.7 703.1 Z" fill="none" stroke="#585858" stroke-width="1.1"/><circle cx="1346.7" cy="703.1" r="1.9" fill="none" stroke="#585858" stroke-width="1"/><g fill="none" stroke="#585858" stroke-width="1.1"><rect x="1379.6" y="697.3" width="7.2" height="3.6" rx="1"/><rect x="1377.4" y="700.5999999999999" width="11.6" height="5.6" rx="1.8"/><rect x="1379.6" y="703.5999999999999" width="7.2" height="4.6" rx="0.6"/></g><path d="M1215.5 817 V829 M1209.5 823 H1221.5 M1234 823 H1246" stroke="#5a5a5a" stroke-width="1"/></svg>
<svg class="a" style="left:0px;top:0px" width="170" height="836" viewBox="0 0 170 836"><g fill="none" stroke="#bdbdbd" stroke-width="1.1" stroke-linejoin="miter"><path d="M5.5 100.5 H59.5 V82 L78 118.5 L59.5 155 V136.5 H5.5 Z"/><path d="M92.3 118.5 L110.5 82 V100.5 H146.5 V82 L164.9 118.5 L146.5 155 V136.5 H110.5 V155 Z"/><circle cx="41.7" cy="210.3" r="36.5"/><circle cx="128.6" cy="210.3" r="36.5"/><circle cx="128.6" cy="210.3" r="18.2"/><path d="M77.9 265.8 C30 270 5.2 285 5.2 302.3 C5.2 320 30 335 77.9 338.8 C50 330 34.9 318 34.9 302.3 C34.9 286 50 274 77.9 265.8 Z"/><path d="M97.86 322.2 A36.7 36.7 0 1 1 107.4 332 L92.4 338.8 Z"/><path d="M5.5 375.5 H23.5 V357.5 H60.5 V375.5 H78.5 V411.5 H60.5 V430.5 H23.5 V411.5 H5.5 Z"/><path d="M92.5 364.5 C98 358 104 357.5 110 357.5 C126 357.5 138 372 150 372 C156 372 161 368 164.5 364.5 V423.3 C161 427 156 430.7 150 430.7 C138 430.7 126 415.3 110 415.3 C104 415.3 98 417 92.5 423.3 Z"/><path d="M42 449 L78.1 485.6 L42 521.8 L5.4 485.6 Z"/><path d="M92.1 485.5 L110.2 449.5 H147.4 L164.7 485.5 L147.4 521.5 H110.2 Z"/><path d="M23.5 541.5 H59.5 L78.5 559.5 V595.5 L59.5 613.5 H23.5 L5.5 595.5 V559.5 Z"/><path d="M128.7 541.2 L163.6 565.9 L150.2 606.5 H107.2 L94.1 565.9 Z"/><path d="M5.2 668.6 L23.8 637.5 H60.7 L78.1 668.6 L60.7 700.5 H23.8 Z"/><rect x="92.5" y="632.5" width="73" height="73"/><rect x="5.5" y="724.5" width="73" height="73" rx="15.5"/><circle cx="128.85" cy="761" r="36.6"/><path d="M5.5 816.5 H78.5 L69.8 850 H14.2 Z"/><path d="M164.5 816.5 V870 H111 Z"/></g></svg>
<div class="a" style="left:0;top:0;width:1420px;height:836px;border-radius:10px;box-shadow:inset 0 1px 0 rgba(255,255,255,0.13);pointer-events:none"></div>
</div></body></html>
